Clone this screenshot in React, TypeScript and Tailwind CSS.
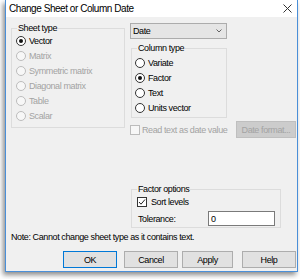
import React from "react";

const F = "font-['Liberation_Sans',Arial,sans-serif]";

function Radio({ label, checked = false, disabled = false }: { label: string; checked?: boolean; disabled?: boolean }) {
  return (
    <div className="flex h-[15px] items-center gap-[3px]">
      <div
        className={
          "flex h-[10px] w-[10px] shrink-0 items-center justify-center rounded-full border " +
          (disabled ? "border-[#bcbcbc] bg-[#f7f7f7]" : "border-[#333333] bg-white")
        }
      >
        {checked && <div className="h-[4px] w-[4px] rounded-full bg-[#111111]" />}
      </div>
      <span className={disabled ? "text-[#a3a3a3]" : "text-black"}>{label}</span>
    </div>
  );
}

function Group({ label, className, children }: { label: string; className: string; children?: React.ReactNode }) {
  return (
    <div className={"relative border border-[#dcdcdc] " + className}>
      <span className="absolute left-[5px] top-[-7px] bg-[#f0f0f0] px-[1px] leading-[12px] text-black">{label}</span>
      {children}
    </div>
  );
}

function Btn({ label, w, className = "", primary = false }: { label: string; w: string; className?: string; primary?: boolean }) {
  return (
    <div
      className={
        "flex h-[17px] items-center justify-center border bg-[#e1e1e1] text-black " +
        (primary ? "border-[#0078d7] " : "border-[#adadad] ") +
        w +
        " " +
        className
      }
    >
      {label}
    </div>
  );
}

export default function App() {
  return (
    <div
      className={
        "relative h-[279px] w-[300px] overflow-hidden whitespace-nowrap bg-white text-[9px] leading-[12px] tracking-[-0.4px] " +
        F
      }
    >
      <div className="ml-[5px] flex h-[272px] w-[293px] flex-col border-x border-b border-[#4a8fd8] bg-[#f0f0f0] shadow-[-2px_3px_5px_rgba(0,0,0,0.45)]">
        {/* Title bar */}
        <div className="flex h-[17px] items-center justify-between bg-white pl-[3px] pr-[5px]">
          <span className="text-[10px] leading-[13px] tracking-[-0.45px] text-black">Change Sheet or Column Date</span>
          <svg width="9" height="9" viewBox="0 0 9 9">
            <path d="M0.5 0.5 L8.5 8.5 M8.5 0.5 L0.5 8.5" stroke="#333333" strokeWidth="1" fill="none" />
          </svg>
        </div>

        {/* Body */}
        <div className="flex flex-1 flex-col pl-[5px]">
          <div className="flex">
            <Group label="Sheet type" className="mt-[11px] h-[100px] w-[114px] pl-[4px] pt-[4px]">
              <Radio label="Vector" checked />
              <Radio label="Matrix" disabled />
              <Radio label="Symmetric matrix" disabled />
              <Radio label="Diagonal matrix" disabled />
              <Radio label="Table" disabled />
              <Radio label="Scalar" disabled />
            </Group>

            <div className="ml-[5px] flex w-[166px] flex-col">
              <div className="mt-[6px] flex h-[16px] w-[97px] items-center justify-between border border-[#acacac] bg-[#e5e5e5] pl-[2px] pr-[4px]">
                <span>Date</span>
                <svg width="6" height="4" viewBox="0 0 6 4">
                  <path d="M0.5 0.5 L3 3 L5.5 0.5" stroke="#555555" strokeWidth="0.9" fill="none" />
                </svg>
              </div>

              <Group label="Column type" className="ml-[1px] mt-[9px] h-[70px] w-[96px] pl-[3px] pt-[6px]">
                <Radio label="Variate" />
                <Radio label="Factor" checked />
                <Radio label="Text" />
                <Radio label="Units vector" />
              </Group>

              <div className="mt-[3px] flex h-[17px] items-center justify-between">
                <div className="flex items-center gap-[2px]">
                  <div className="h-[10px] w-[10px] border border-[#bcbcbc] bg-[#f7f7f7]" />
                  <span className="text-[#a3a3a3]">Read text as date value</span>
                </div>
                <div className="flex h-[17px] w-[60px] items-center justify-center border border-[#bfbfbf] bg-[#cccccc] text-[#a3a3a3]">
                  Date format...
                </div>
              </div>

              <Group label="Factor options" className="ml-[1px] mt-[51px] h-[39px] w-[150px] pt-[5px]">
                <div className="flex h-[13px] items-center gap-[4px] pl-[5px]">
                  <div className="flex h-[10px] w-[10px] items-center justify-center border border-[#333333] bg-white">
                    <svg width="8" height="8" viewBox="0 0 8 8">
                      <path d="M1 4 L3 6.2 L7 1.5" stroke="#222222" strokeWidth="1" fill="none" />
                    </svg>
                  </div>
                  <span>Sort levels</span>
                </div>
                <div className="mt-[3px] flex items-center pl-[6px]">
                  <span className="w-[70px]">Tolerance:</span>
                  <div className="flex h-[15px] w-[67px] items-center border border-[#7a7a7a] bg-white pl-[2px]">0</div>
                </div>
              </Group>
            </div>
          </div>

          <div className="mt-[3px] h-[12px]">Note: Cannot change sheet type as it contains text.</div>

          <div className="mt-[8px] flex pl-[52px]">
            <Btn label="OK" w="w-[54px]" primary />
            <Btn label="Cancel" w="w-[54px]" className="ml-[7px]" />
            <Btn label="Apply" w="w-[51px]" className="ml-[4px]" />
            <Btn label="Help" w="w-[54px]" className="ml-[9px]" />
          </div>
        </div>
      </div>
    </div>
  );
}
